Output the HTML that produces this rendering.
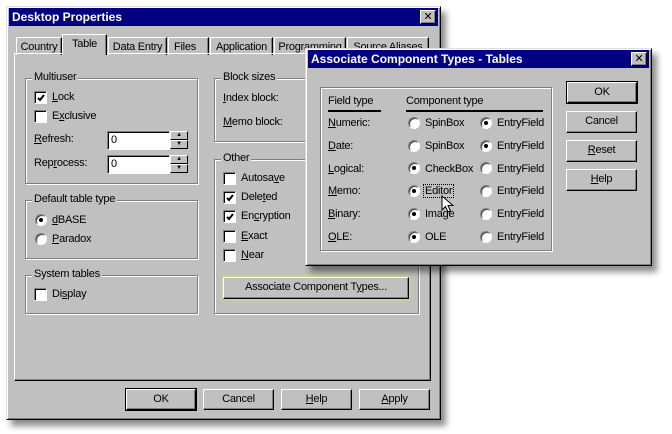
<!DOCTYPE html><html><head><style>
*{box-sizing:border-box;margin:0;padding:0}
body{width:672px;height:434px;background:#fff;font:11px "Liberation Sans",Arial,sans-serif;letter-spacing:-0.25px;color:#000;position:relative;overflow:hidden}
.a{position:absolute}
.win{background:#c0c0c0;border:1px solid;border-color:#dfdfdf #000 #000 #dfdfdf;box-shadow:inset 1px 1px #fff,inset -1px -1px #808080,5px 6px 6px rgba(0,0,0,.45)}
.title{background:#000080;color:#fff;font-weight:bold;font-size:12px;letter-spacing:0;height:18px;line-height:18px;padding-left:3px}
.xb{width:16px;height:14px;background:#c0c0c0;border:1px solid;border-color:#fff #000 #000 #fff;box-shadow:inset -1px -1px #808080;font:bold 11px/11px "DejaVu Sans",sans-serif;color:#000;text-align:center}
.grp{border:1px solid #808080;box-shadow:1px 1px #fff,inset 1px 1px #fff}
.gl{position:absolute;top:-8px;left:6px;background:#c0c0c0;padding:0 2px}
.btn{background:#c0c0c0;border:1px solid;border-color:#fff #000 #000 #fff;box-shadow:inset -1px -1px #808080;text-align:center;line-height:19px}
.btn.def{outline:1px solid #000}
.cb{width:13px;height:13px;background:#fff;border:1px solid;border-color:#808080 #fff #fff #808080;box-shadow:inset 1px 1px #000}
.cb.on{background:#fff url() }
.rb{width:12px;height:12px;border-radius:50%;background:#fff;border:1px solid;border-color:#808080 #fff #fff #808080;box-shadow:inset 1px 1px #404040}
.rb.on::after{content:"";position:absolute;left:3px;top:3px;width:4px;height:4px;border-radius:50%;background:#000}
.tab{background:#c0c0c0;border:1px solid;border-bottom:none;border-color:#fff #000 #000 #fff;box-shadow:inset -1px 0 #808080;height:18px;line-height:18px;text-align:center;white-space:nowrap;overflow:hidden}
.ed{background:#fff;border:1px solid;border-color:#808080 #fff #fff #808080;box-shadow:inset 1px 1px #000;padding-left:3px;line-height:17px}
.spin{width:18px;height:9px;background:#c0c0c0;border:1px solid;border-color:#fff #000 #000 #fff;font-size:6px;line-height:7px;text-align:center}
u{text-decoration:underline}
</style></head><body>

<div class="a win" style="left:6px;top:6px;width:435px;height:414px"></div>
<div class="a title" style="left:9px;top:8px;width:429px">Desktop Properties</div>
<div class="a xb" style="left:420px;top:10px">✕</div>

<div class="a tab" style="left:16px;top:37px;width:46px">Country</div>
<div class="a tab" style="left:108px;top:37px;width:59px">Data Entry</div>
<div class="a tab" style="left:168px;top:37px;width:41px;text-align:left;padding-left:5px">Files</div>
<div class="a tab" style="left:210px;top:37px;width:63px">Application</div>
<div class="a tab" style="left:274px;top:37px;width:72px">Programming</div>
<div class="a tab" style="left:347px;top:37px;width:82px">Source Aliases</div>
<div class="a" style="left:14px;top:53px;width:417px;height:328px;border:1px solid;border-color:#fff #000 #000 #fff;box-shadow:inset -1px -1px #808080"></div>
<div class="a tab" style="left:62px;top:34px;width:45px;height:21px;border-bottom:none;line-height:19px;z-index:2">Table</div>

<div class="a grp" style="left:25px;top:78px;width:173px;height:106px"><span class="gl">Multiuser</span></div>
<div class="a cb" style="left:34px;top:91px"><svg width="11" height="11" style="position:absolute;left:1px;top:1px"><path d="M2 5L4 7L8 2" fill="none" stroke="#000" stroke-width="2"/></svg></div><div class="a" style="left:52px;top:91px"><u>L</u>ock</div>
<div class="a cb" style="left:34px;top:110px"></div><div class="a" style="left:52px;top:110px">E<u>x</u>clusive</div>
<div class="a" style="left:34px;top:133px"><u>R</u>efresh:</div>
<div class="a ed" style="left:107px;top:131px;width:63px;height:19px">0</div>
<div class="a spin" style="left:170px;top:131px">▲</div><div class="a spin" style="left:170px;top:140px">▼</div>
<div class="a" style="left:34px;top:157px">Rep<u>r</u>ocess:</div>
<div class="a ed" style="left:107px;top:155px;width:63px;height:19px">0</div>
<div class="a spin" style="left:170px;top:155px">▲</div><div class="a spin" style="left:170px;top:164px">▼</div>

<div class="a grp" style="left:25px;top:200px;width:173px;height:59px"><span class="gl">Default table type</span></div>
<div class="a rb on" style="left:35px;top:214px"></div><div class="a" style="left:52px;top:214px"><u>d</u>BASE</div>
<div class="a rb" style="left:35px;top:233px"></div><div class="a" style="left:52px;top:233px"><u>P</u>aradox</div>

<div class="a grp" style="left:25px;top:275px;width:173px;height:39px"><span class="gl">System tables</span></div>
<div class="a cb" style="left:34px;top:288px"></div><div class="a" style="left:52px;top:288px">Di<u>s</u>play</div>

<div class="a grp" style="left:214px;top:78px;width:206px;height:64px"><span class="gl">Block sizes</span></div>
<div class="a" style="left:223px;top:92px"><u>I</u>ndex block:</div>
<div class="a" style="left:223px;top:116px"><u>M</u>emo block:</div>

<div class="a grp" style="left:214px;top:159px;width:205px;height:155px"><span class="gl">Other</span></div>
<div class="a cb" style="left:223px;top:172px"></div><div class="a" style="left:241px;top:172px">Autosa<u>v</u>e</div>
<div class="a cb" style="left:223px;top:191px"><svg width="11" height="11" style="position:absolute;left:1px;top:1px"><path d="M2 5L4 7L8 2" fill="none" stroke="#000" stroke-width="2"/></svg></div><div class="a" style="left:241px;top:191px">Dele<u>t</u>ed</div>
<div class="a cb" style="left:223px;top:210px"><svg width="11" height="11" style="position:absolute;left:1px;top:1px"><path d="M2 5L4 7L8 2" fill="none" stroke="#000" stroke-width="2"/></svg></div><div class="a" style="left:241px;top:210px">En<u>c</u>ryption</div>
<div class="a cb" style="left:223px;top:230px"></div><div class="a" style="left:241px;top:230px"><u>E</u>xact</div>
<div class="a cb" style="left:223px;top:249px"></div><div class="a" style="left:241px;top:249px"><u>N</u>ear</div>
<div class="a btn" style="left:223px;top:277px;width:186px;height:22px;box-shadow:inset -1px -1px #808080,0 0 3px #ee4">Associate Component T<u>y</u>pes...</div>

<div class="a btn def" style="left:126px;top:389px;width:70px;height:21px">OK</div>
<div class="a btn" style="left:203px;top:389px;width:71px;height:21px">Cancel</div>
<div class="a btn" style="left:281px;top:389px;width:71px;height:21px"><u>H</u>elp</div>
<div class="a btn" style="left:359px;top:389px;width:71px;height:21px"><u>A</u>pply</div>

<div class="a win" style="left:305px;top:48px;width:347px;height:218px"></div>
<div class="a title" style="left:308px;top:50px;width:341px">Associate Component Types - Tables</div>
<div class="a xb" style="left:631px;top:52px">✕</div>
<div class="a grp" style="left:320px;top:87px;width:232px;height:164px"></div>
<div class="a" style="left:328px;top:95px">Field type</div>
<div class="a" style="left:328px;top:110px;width:53px;height:2px;background:#000"></div>
<div class="a" style="left:406px;top:95px">Component type</div>
<div class="a" style="left:406px;top:110px;width:137px;height:2px;background:#000"></div>

<div class="a" style="left:328px;top:117px"><u>N</u>umeric:</div>
<div class="a rb" style="left:408px;top:117px"></div><div class="a" style="left:425px;top:117px">SpinBox</div>
<div class="a rb on" style="left:480px;top:117px"></div><div class="a" style="left:497px;top:117px">EntryField</div>
<div class="a" style="left:328px;top:140px"><u>D</u>ate:</div>
<div class="a rb" style="left:408px;top:140px"></div><div class="a" style="left:425px;top:140px">SpinBox</div>
<div class="a rb on" style="left:480px;top:140px"></div><div class="a" style="left:497px;top:140px">EntryField</div>
<div class="a" style="left:328px;top:163px"><u>L</u>ogical:</div>
<div class="a rb on" style="left:408px;top:162px"></div><div class="a" style="left:425px;top:163px">CheckBox</div>
<div class="a rb" style="left:480px;top:162px"></div><div class="a" style="left:497px;top:163px">EntryField</div>
<div class="a" style="left:328px;top:185px"><u>M</u>emo:</div>
<div class="a rb on" style="left:408px;top:185px"></div><div class="a" style="left:423px;top:184px;border:1px dotted #000;padding:0 1px">Editor</div>
<div class="a rb" style="left:480px;top:185px"></div><div class="a" style="left:497px;top:185px">EntryField</div>
<div class="a" style="left:328px;top:208px"><u>B</u>inary:</div>
<div class="a rb on" style="left:408px;top:208px"></div><div class="a" style="left:425px;top:208px">Image</div>
<div class="a rb" style="left:480px;top:208px"></div><div class="a" style="left:497px;top:208px">EntryField</div>
<div class="a" style="left:328px;top:231px"><u>O</u>LE:</div>
<div class="a rb on" style="left:408px;top:231px"></div><div class="a" style="left:425px;top:231px">OLE</div>
<div class="a rb" style="left:480px;top:231px"></div><div class="a" style="left:497px;top:231px">EntryField</div>

<svg class="a" style="left:441px;top:195px" width="14" height="20"><path d="M1 1V15L4.5 11.5L7 17L9.5 16L7 10.5H12Z" fill="#fff" stroke="#000"/></svg>

<div class="a btn def" style="left:567px;top:82px;width:70px;height:21px">OK</div>
<div class="a btn" style="left:566px;top:111px;width:71px;height:22px">Cancel</div>
<div class="a btn" style="left:566px;top:140px;width:71px;height:22px"><u>R</u>eset</div>
<div class="a btn" style="left:566px;top:169px;width:71px;height:22px"><u>H</u>elp</div>
</body></html>
